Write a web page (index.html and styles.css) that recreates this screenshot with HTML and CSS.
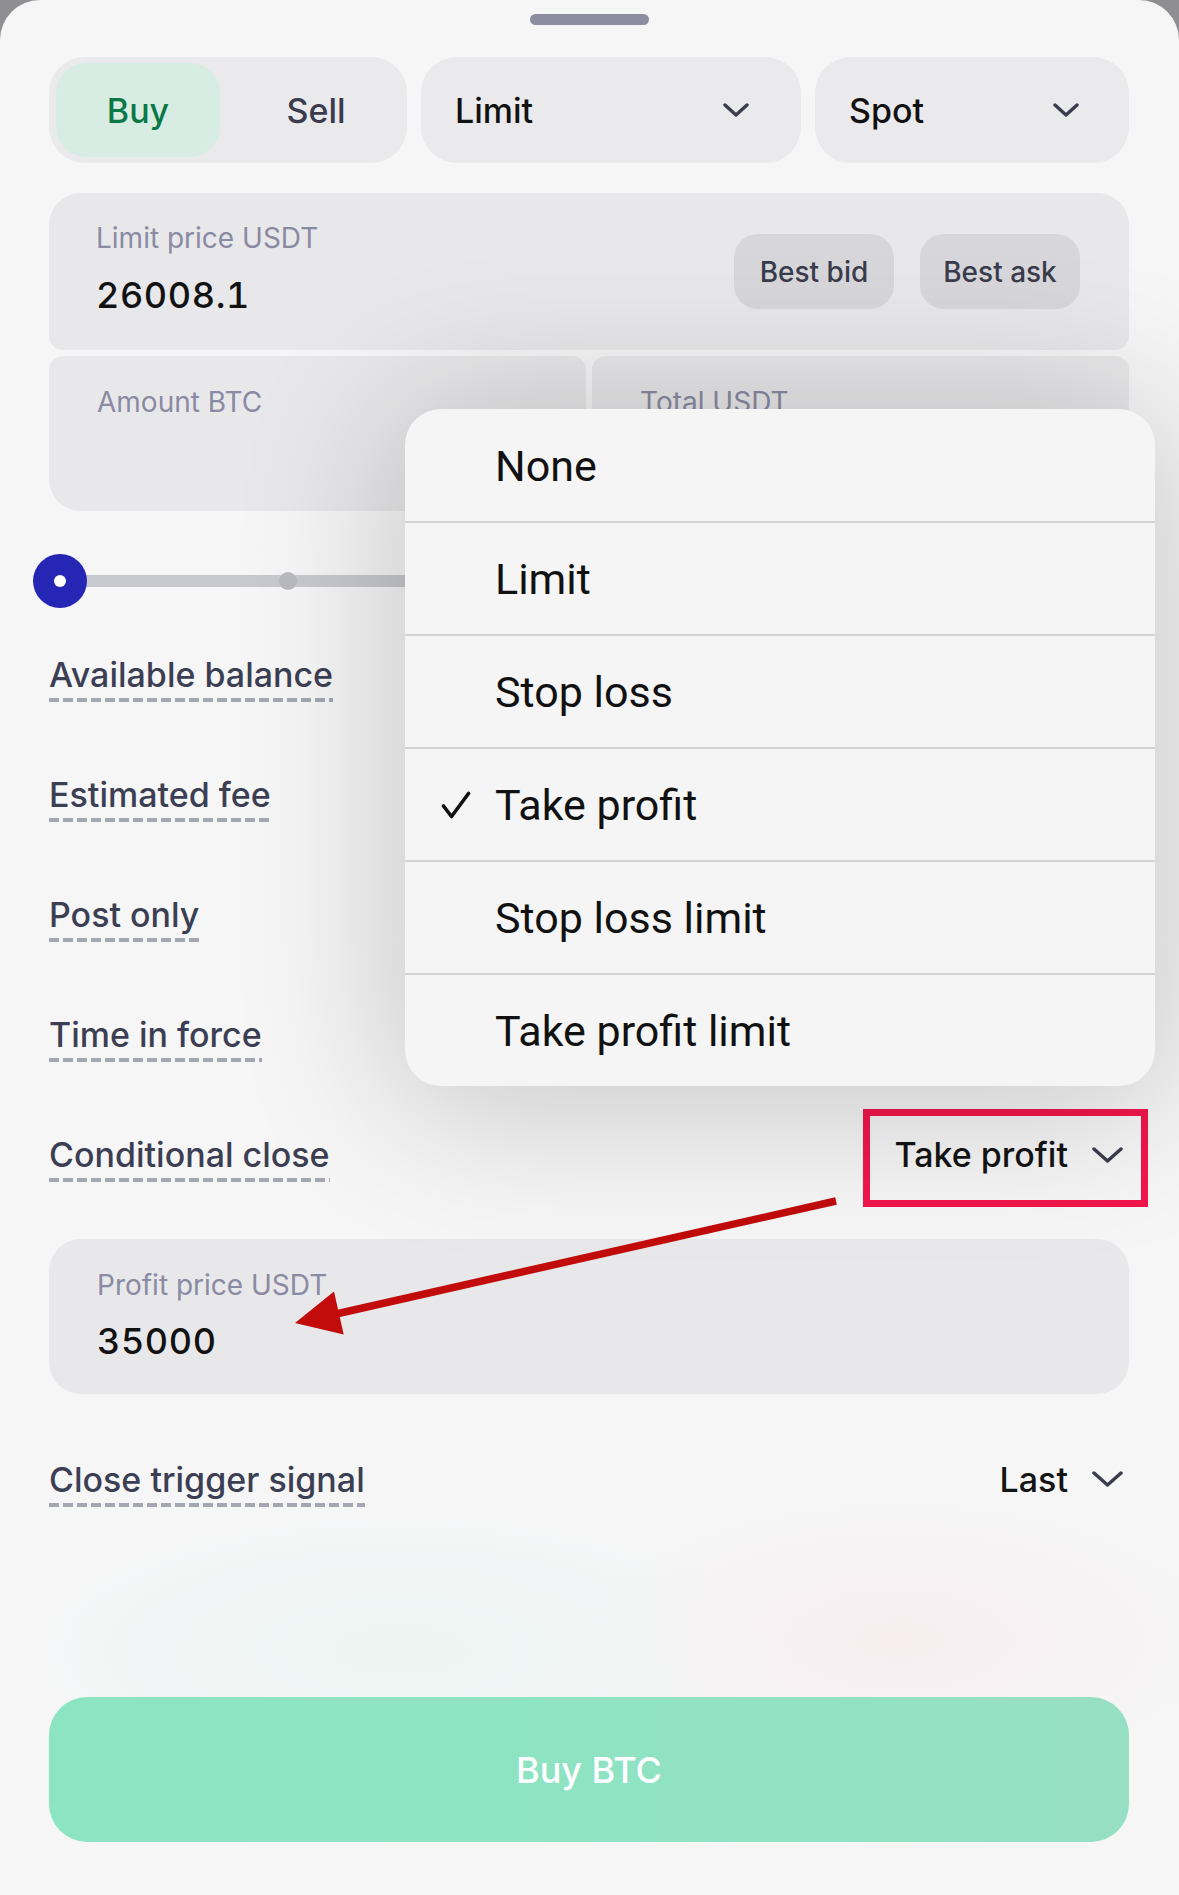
FILE: index.html
```html
<!DOCTYPE html>
<html lang="en">
<head>
<meta charset="utf-8">
<title>Order ticket</title>
<link rel="stylesheet" href="styles.css">
</head>
<body>
<div class="sheet">
  <div class="handle"></div>
  <div class="content">
    <div class="toprow">
      <div class="seg">
        <div class="seg-item active">Buy</div>
        <div class="seg-item">Sell</div>
      </div>
      <div class="select sel-limit">
        <span>Limit</span>
        <svg class="chev-sm" viewBox="0 0 26 14" width="26" height="14"><polyline points="2,2 13,12 24,2"/></svg>
      </div>
      <div class="select sel-spot">
        <span>Spot</span>
        <svg class="chev-sm" viewBox="0 0 26 14" width="26" height="14"><polyline points="2,2 13,12 24,2"/></svg>
      </div>
    </div>

    <div class="field field-price">
      <div class="field-main">
        <div class="field-label">Limit price USDT</div>
        <div class="field-value">26008.1</div>
      </div>
      <div class="quick">
        <button class="pill">Best bid</button>
        <button class="pill">Best ask</button>
      </div>
    </div>

    <div class="pair">
      <div class="field field-half"><div class="field-label">Amount BTC</div></div>
      <div class="field field-half"><div class="field-label">Total USDT</div></div>
    </div>

    <div class="slider">
      <div class="knob"></div>
      <div class="track">
        <span class="tick t1"></span>
        <span class="tick t2"></span>
        <span class="tick t3"></span>
        <span class="tick t4"></span>
      </div>
    </div>

    <div class="rows">
      <div class="row"><span class="dotted">Available balance</span></div>
      <div class="row"><span class="dotted">Estimated fee</span></div>
      <div class="row"><span class="dotted">Post only</span></div>
      <div class="row"><span class="dotted">Time in force</span></div>
      <div class="row">
        <span class="dotted">Conditional close</span>
        <div class="value boxed">
          <span>Take profit</span>
          <svg class="chev" viewBox="0 0 31 16" width="31" height="16"><polyline points="2,2 15.5,14 29,2"/></svg>
        </div>
      </div>
    </div>

    <div class="field field-profit">
      <div class="field-label">Profit price USDT</div>
      <div class="field-value">35000</div>
    </div>

    <div class="row row-trigger">
      <span class="dotted">Close trigger signal</span>
      <div class="value plain">
        <span>Last</span>
        <svg class="chev" viewBox="0 0 31 16" width="31" height="16"><polyline points="2,2 15.5,14 29,2"/></svg>
      </div>
    </div>

    <button class="buy">Buy BTC</button>
  </div>

  <svg class="arrow" viewBox="0 0 570 170" width="570" height="170">
    <line x1="556" y1="21" x2="56" y2="134"/>
    <polygon points="15,143 54,111.6 63.7,154.6"/>
  </svg>

  <div class="menu">
    <div class="menu-item"><span class="check"></span><span>None</span></div>
    <div class="menu-item"><span class="check"></span><span>Limit</span></div>
    <div class="menu-item"><span class="check"></span><span>Stop loss</span></div>
    <div class="menu-item"><span class="check"><svg viewBox="0 0 30 28" width="30" height="28"><path d="M2.5 15 L10.5 25.5 L27.5 2.5"/></svg></span><span>Take profit</span></div>
    <div class="menu-item"><span class="check"></span><span>Stop loss limit</span></div>
    <div class="menu-item"><span class="check"></span><span>Take profit limit</span></div>
  </div>
</div>
</body>
</html>
```

FILE: styles.css
```css
html, body {
  margin: 0;
  padding: 0;
  background: #8f8f93;
}

.sheet {
  position: relative;
  width: 1179px;
  height: 1895px;
  background:
    radial-gradient(ellipse 320px 140px at 900px 1640px, rgba(255, 190, 200, 0.16), transparent),
    radial-gradient(ellipse 380px 140px at 400px 1650px, rgba(170, 235, 210, 0.14), transparent),
    #f6f6f7;
  border-radius: 40px 40px 0 0;
  overflow: hidden;
  font-family: Inter, "Liberation Sans", sans-serif;
}

.handle {
  width: 119px;
  height: 11px;
  border-radius: 6px;
  background: #8c8ea0;
  margin: 14px auto 0;
}

.content {
  padding: 32px 50px 0 49px;
}

/* top row */
.toprow {
  display: flex;
  gap: 14px;
  height: 106px;
}

.seg {
  width: 358px;
  box-sizing: border-box;
  padding: 6px 7px;
  display: flex;
  background: #eaeaec;
  border-radius: 36px;
}

.seg-item {
  flex: 1;
  display: flex;
  align-items: center;
  justify-content: center;
  border-radius: 30px;
  font-size: 34px;
  font-weight: 500;
  color: #3a3c4d;
  padding-left: 12px;
}

.seg-item.active {
  flex: 0 0 164px;
  padding-left: 0;
  background: #d7ede4;
  color: #0b7845;
}

.select {
  display: flex;
  align-items: center;
  justify-content: space-between;
  box-sizing: border-box;
  background: #eaeaec;
  border-radius: 36px;
  padding: 0 52px 0 34px;
  font-size: 34px;
  font-weight: 500;
  color: #111;
}

.sel-limit { width: 380px; }
.sel-spot { flex: 1; padding-right: 50px; }

.chev-sm polyline, .chev polyline {
  fill: none;
  stroke: #3b3d4e;
  stroke-width: 3.4;
  stroke-linecap: round;
  stroke-linejoin: round;
}

/* fields */
.field {
  background: #e8e8ea;
  box-sizing: border-box;
}

.field-label {
  font-size: 28px;
  line-height: 34px;
  color: #8a8aa2;
}

.field-value {
  font-size: 36px;
  line-height: 44px;
  font-weight: 500;
  color: #121212;
  margin-top: 18px;
  font-variant-numeric: tabular-nums;
  letter-spacing: 0.6px;
}

.field-price {
  margin-top: 30px;
  height: 157px;
  border-radius: 32px 32px 14px 14px;
  display: flex;
  justify-content: space-between;
  padding: 28px 49px 0 47px;
}

.quick {
  display: flex;
  gap: 26px;
  align-self: center;
  margin-top: -28px;
}

.pill {
  width: 160px;
  height: 75px;
  border: 0;
  border-radius: 24px;
  background: #d7d7db;
  font-family: Inter, "Liberation Sans", sans-serif;
  font-size: 28px;
  font-weight: 500;
  color: #3a3c4b;
  padding: 0;
}

.pair {
  display: flex;
  gap: 6px;
  margin-top: 6px;
}

.field-half {
  flex: 1;
  height: 155px;
  border-radius: 14px 14px 32px 32px;
  padding: 29px 0 0 48px;
}

/* slider */
.slider {
  display: flex;
  align-items: center;
  height: 54px;
  margin-top: 43px;
  margin-left: -16px;
}

.knob {
  position: relative;
  z-index: 1;
  flex-shrink: 0;
  width: 54px;
  height: 54px;
  border-radius: 50%;
  background: #2626b5;
  display: flex;
  align-items: center;
  justify-content: center;
}

.knob::after {
  content: "";
  width: 12px;
  height: 12px;
  border-radius: 50%;
  background: #fff;
}

.track {
  position: relative;
  flex: 1;
  height: 12px;
  margin-left: -4px;
  background: #c9cad0;
}

.tick {
  position: absolute;
  top: -3px;
  width: 18px;
  height: 18px;
  border-radius: 50%;
  background: #b9bac1;
}

.t1 { left: 196px; }
.t2 { left: 424px; }
.t3 { left: 652px; }
.t4 { left: 880px; }

/* rows */
.rows { margin-top: 10px; }

.row {
  height: 120px;
  display: flex;
  align-items: center;
  justify-content: space-between;
}

.dotted {
  font-size: 34px;
  line-height: 41px;
  font-weight: 500;
  color: #3c3f53;
  padding-bottom: 7px;
  background-image: repeating-linear-gradient(90deg, #a4a6b2 0 10px, transparent 10px 14px);
  background-size: 100% 4px;
  background-position: left bottom;
  background-repeat: no-repeat;
}

.value {
  display: flex;
  align-items: center;
  gap: 24px;
  font-size: 34px;
  font-weight: 500;
  color: #141414;
  padding-right: 6px;
}

.plain {
  margin-bottom: 8px;
}

.boxed {
  height: 98px;
  box-sizing: border-box;
  border: 7px solid #f2164b;
  padding: 0 18px 7px 25px;
  margin-right: -19px;
}

.field-profit {
  margin-top: 21px;
  height: 155px;
  border-radius: 32px;
  padding: 29px 0 0 48px;
}

.field-profit .field-value { margin-top: 17px; }

.row-trigger { margin-top: 29px; }

.buy {
  display: block;
  margin-top: 154px;
  width: 100%;
  height: 145px;
  border: 0;
  border-radius: 38px;
  background: linear-gradient(90deg, #8ce4c3 0%, #8fe3c3 50%, #97dfc4 100%);
  color: #fff;
  font-family: Inter, "Liberation Sans", sans-serif;
  font-size: 36px;
  font-weight: 500;
}

/* annotation arrow */
.arrow {
  position: absolute;
  left: 280px;
  top: 1180px;
}

.arrow line {
  stroke: #c20b0b;
  stroke-width: 7.5;
}

.arrow polygon {
  fill: #c20b0b;
}

/* dropdown menu */
.menu {
  position: absolute;
  left: 405px;
  top: 409px;
  width: 750px;
  border-radius: 36px;
  background: #f5f5f5;
  box-shadow: 0 10px 160px 10px rgba(0, 0, 0, 0.2);
  overflow: hidden;
  font-family: Roboto, "Liberation Sans", sans-serif;
}

.menu-item {
  height: 113px;
  box-sizing: border-box;
  display: flex;
  align-items: center;
  padding-left: 36px;
  font-size: 43px;
  color: #111;
}

.menu-item:first-child {
  height: 112px;
  padding-top: 2px;
}

.menu-item + .menu-item {
  border-top: 2px solid #d3d3d5;
}

.check {
  width: 54px;
  flex-shrink: 0;
  display: flex;
}

.check path {
  fill: none;
  stroke: #111;
  stroke-width: 3.6;
  stroke-linecap: round;
  stroke-linejoin: round;
}
```
